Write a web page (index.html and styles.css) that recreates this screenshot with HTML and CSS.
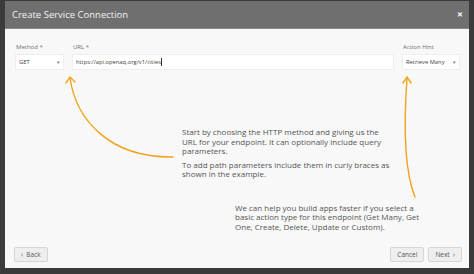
FILE: index.html
```html
<!DOCTYPE html>
<html lang="en">
<head>
    <meta charset="UTF-8">
    <title>Create Service Connection</title>
    <link rel="stylesheet" href="styles.css">
</head>
<body>

<div class="window">
    <header class="titlebar">
        <h1>Create Service Connection</h1>
        <span class="close">&#x2715;</span>
    </header>

    <div class="content">
        <div class="fields">
            <div class="field method">
                <label>Method <span class="req">*</span></label>
                <div class="select">GET <span class="caret">&#9662;</span></div>
            </div>
            <div class="field url">
                <label>URL <span class="req">*</span></label>
                <div class="input">https://api.openaq.org/v1/cities<span class="cursor"></span></div>
            </div>
            <div class="field hint">
                <label>Action Hint</label>
                <div class="select">Retrieve Many <span class="caret">&#9662;</span></div>
            </div>
        </div>

        <div class="help help-url">
            <p>Start by choosing the HTTP method and giving us the<br>URL for your endpoint. It can optionally include query<br>parameters.</p>
            <p>To add path parameters include them in curly braces as<br>shown in the example.</p>
        </div>

        <div class="help help-action">
            <p>We can help you build apps faster if you select a<br>basic action type for this endpoint (Get Many, Get<br>One, Create, Delete, Update or Custom).</p>
        </div>

        <footer class="buttons">
            <button class="btn">&#8249;&nbsp; Back</button>
            <span class="spacer"></span>
            <button class="btn">Cancel</button>
            <button class="btn">Next &nbsp;&#8250;</button>
        </footer>
    </div>

    <!-- стрелки-подсказки поверх формы -->
    <svg class="arrows" width="474" height="274" viewBox="0 0 474 274">
        <path d="M173 157 C 110 158, 76 120, 70 78" />
        <path d="M66 83 L70 77 L75 82" />
        <path d="M415 197 C 404 170, 404 120, 407 78" />
        <path d="M403 83 L407 77 L411 83" />
    </svg>
</div>

</body>
</html>
```

FILE: styles.css
```css
body {
    margin: 0;
    padding: 0;
    font-family: "Open Sans", "Noto Sans", sans-serif;
    background-color: #3b3b3b;
}
.window {
    position: relative;
    width: 474px;
    height: 274px;
    box-sizing: border-box;
    padding: 1px 5px 6px 5px;
    background-color: #3b3b3b;
    display: flex;
    flex-direction: column;
}
.titlebar {
    height: 27px;
    flex: none;
    background-color: #6f6f6f;
    border-bottom: 1px solid #8a8a8a;
    display: flex;
    align-items: center;
    padding: 0 6px 0 7px;
}
.titlebar h1 {
    flex: 1;
    margin: 0;
    font-size: 9.5px;
    font-weight: normal;
    color: #f2f2f2;
}
.close {
    color: #fff;
    font-size: 7px;
    font-weight: bold;
}
.content {
    flex: 1;
    background-color: #f8f8f8;
    padding: 14px 9px 6px 10px;
    display: flex;
    flex-direction: column;
}
.fields {
    display: flex;
    gap: 8px;
}
.field label {
    display: block;
    font-size: 6px;
    color: #707070;
    margin-bottom: 3px;
    margin-left: 1px;
}
.req {
    color: #777;
}
.method {
    width: 49px;
}
.url {
    flex: 1;
}
.hint {
    width: 58px;
}
.select,
.input {
    height: 16px;
    box-sizing: border-box;
    background-color: #fff;
    border: 1px solid #eeeeee;
    font-size: 5.8px;
    color: #444;
    display: flex;
    align-items: center;
    padding: 0 3px;
    white-space: nowrap;
}
.select {
    justify-content: space-between;
    gap: 3px;
}
.caret {
    font-size: 5px;
    color: #777;
}
.cursor {
    display: inline-block;
    width: 1px;
    height: 8px;
    background-color: #333;
}
.help {
    font-size: 8px;
    line-height: 9.5px;
    color: #555;
    white-space: nowrap;
}
.help p {
    margin: 0 0 4px 0;
}
.help-url {
    margin: 57px 0 0 167px;
}
.help-action {
    margin: 20px 0 0 220px;
}
.buttons {
    margin-top: auto;
    display: flex;
    gap: 4px;
    margin-right: -2px;
    margin-left: -1px;
}
.spacer {
    flex: 1;
}
.btn {
    font-family: inherit;
    font-size: 6.5px;
    color: #555;
    background-color: #eeeeee;
    border: 1px solid #d6d6d6;
    border-radius: 2px;
    height: 15px;
    padding: 0 6px;
}
.arrows {
    position: absolute;
    left: 0;
    top: 0;
    pointer-events: none;
}
.arrows path {
    fill: none;
    stroke: #f0a41c;
    stroke-width: 1.4;
    stroke-linecap: round;
}
```
